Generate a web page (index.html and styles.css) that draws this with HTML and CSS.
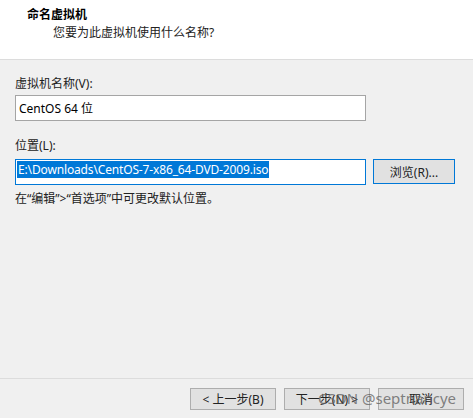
FILE: index.html
```html
<!DOCTYPE html>
<html lang="zh">
<head>
<meta charset="utf-8">
<title>命名虚拟机</title>
<link rel="stylesheet" href="styles.css">
</head>
<body>
<div class="dialog">
  <div class="header">
    <div class="title">命名虚拟机</div>
    <div class="subtitle">您要为此虚拟机使用什么名称?</div>
  </div>
  <div class="main">
    <div class="label label-name">虚拟机名称(V):</div>
    <div class="field field-name"><span class="value">CentOS 64 位</span></div>
    <div class="label label-loc">位置(L):</div>
    <div class="row">
      <div class="field field-loc"><span class="selected">E:\Downloads\CentOS-7-x86_64-DVD-2009.iso</span></div>
      <div class="btn btn-browse">浏览(R)...</div>
    </div>
    <div class="hint">在“编辑”&gt;“首选项”中可更改默认位置。</div>
  </div>
  <div class="footer">
    <div class="btn">&lt; 上一步(B)</div>
    <div class="btn">下一步(N) &gt;</div>
    <div class="btn">取消</div>
  </div>
  <div class="watermark">CSDN @septnancye</div>
</div>
</body>
</html>
```
FILE: styles.css
```css
html, body {
  margin: 0;
  padding: 0;
  background: #f0f0f0;
}
.dialog {
  position: relative;
  width: 473px;
  height: 418px;
  display: flex;
  flex-direction: column;
  background: #f0f0f0;
  font-family: "Noto Sans", "Noto Sans CJK SC", sans-serif;
  font-size: 12px;
  color: #000;
  overflow: hidden;
}
.header {
  box-sizing: border-box;
  height: 60px;
  background: #fff;
  border-bottom: 1px solid #dcdcdc;
  padding: 7px 0 0 27px;
}
.title {
  font-weight: bold;
  line-height: 16px;
}
.subtitle {
  line-height: 16px;
  margin: 2px 0 0 26px;
  color: #222;
}
.main {
  flex: 1;
  padding: 16px 0 0 15px;
}
.label {
  line-height: 16px;
  color: #222;
}
.label-name {
  margin-bottom: 3px;
}
.label-loc {
  margin-top: 17px;
  margin-bottom: 5px;
}
.field {
  box-sizing: border-box;
  width: 351px;
  height: 26px;
  background: #fff;
  border: 1px solid #a5a5a5;
  display: flex;
  align-items: center;
}
.field-name {
  padding-left: 3px;
}
.field-loc {
  border-color: #0078d7;
  padding-left: 1px;
  align-items: flex-start;
  padding-top: 1px;
}
.selected {
  background: #0078d7;
  color: #fff;
  line-height: 17px;
  padding: 0 1px;
  letter-spacing: -0.15px;
}
.row {
  display: flex;
  align-items: flex-start;
}
.btn {
  box-sizing: border-box;
  width: 86px;
  height: 22px;
  background: #e1e1e1;
  border: 1px solid #adadad;
  display: flex;
  align-items: center;
  justify-content: center;
  color: #222;
}
.btn-browse {
  width: 82px;
  height: 25px;
  margin-left: 7px;
  border-color: #0078d7;
}
.hint {
  margin-top: 6px;
  line-height: 16px;
  color: #222;
}
.footer {
  box-sizing: border-box;
  height: 40px;
  border-top: 1px solid #dcdcdc;
  display: flex;
  justify-content: flex-end;
  gap: 8px;
  padding: 9px 9px 0 0;
}
.watermark {
  position: absolute;
  z-index: 2;
  left: 318px;
  top: 389px;
  font-size: 15px;
  line-height: 18px;
  color: rgba(100, 100, 100, 0.8);
  white-space: nowrap;
}
```
